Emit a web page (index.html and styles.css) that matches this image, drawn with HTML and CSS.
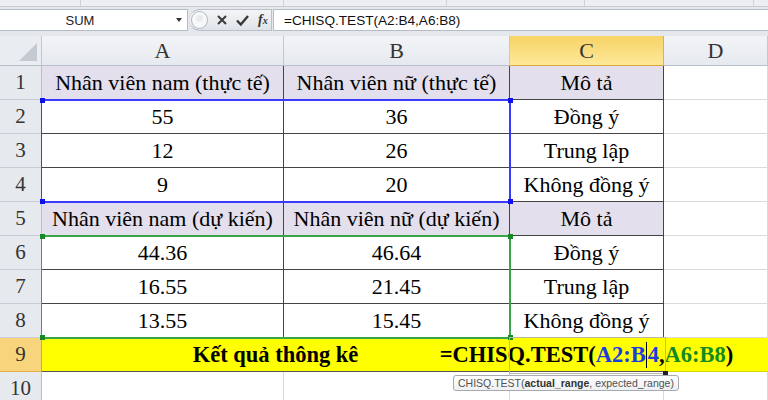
FILE: index.html
```html
<!DOCTYPE html>
<html>
<head>
<meta charset="utf-8">
<link rel="stylesheet" href="styles.css">
</head>
<body>
<div class="app">
  <div class="ribbon">
    <span class="rg w80"></span><span class="rg w203"></span><span class="rg w163"></span><span class="rg w138"></span><span class="rg w169"></span>
  </div>
  <div class="fbar">
    <div class="namebox"><span class="nb-text">SUM</span><span class="nb-arrow"></span></div>
    <div class="btns">
      <span class="grip"></span>
      <svg class="ico" width="10" height="10" viewBox="0 0 10 10"><path d="M1 1 L9 9 M9 1 L1 9" stroke="#3a3a3a" stroke-width="2" fill="none"/></svg>
      <svg class="ico" width="13" height="11" viewBox="0 0 13 11"><path d="M1 5.5 L4.8 9.5 L12 1" stroke="#3a3a3a" stroke-width="2.4" fill="none" stroke-linejoin="miter"/></svg>
      <span class="fx"><i>f</i><i class="fx-x">x</i></span>
    </div>
    <div class="formula">=CHISQ.TEST(A2:B4,A6:B8)</div>
  </div>
  <div class="sheet">
    <div class="corner"><span class="tri"></span></div>
    <div class="ch">A</div><div class="ch">B</div><div class="ch ch-sel">C</div><div class="ch">D</div>

    <div class="rh">1</div>
    <div class="c t hd">Nhân viên nam (thực tế)</div>
    <div class="c t hd">Nhân viên nữ (thực tế)</div>
    <div class="c t hd">Mô tả</div>
    <div class="c"></div>

    <div class="rh">2</div>
    <div class="c t">55</div><div class="c t">36</div><div class="c t">Đồng ý</div><div class="c"></div>

    <div class="rh">3</div>
    <div class="c t">12</div><div class="c t">26</div><div class="c t">Trung lập</div><div class="c"></div>

    <div class="rh">4</div>
    <div class="c t">9</div><div class="c t">20</div><div class="c t">Không đồng ý</div><div class="c"></div>

    <div class="rh">5</div>
    <div class="c t hd">Nhân viên nam (dự kiến)</div>
    <div class="c t hd">Nhân viên nữ (dự kiến)</div>
    <div class="c t hd">Mô tả</div>
    <div class="c"></div>

    <div class="rh">6</div>
    <div class="c t">44.36</div><div class="c t">46.64</div><div class="c t">Đồng ý</div><div class="c"></div>

    <div class="rh">7</div>
    <div class="c t">16.55</div><div class="c t">21.45</div><div class="c t">Trung lập</div><div class="c"></div>

    <div class="rh">8</div>
    <div class="c t">13.55</div><div class="c t">15.45</div><div class="c t">Không đồng ý</div><div class="c"></div>

    <div class="rh rh-sel">9</div>
    <div class="c y y-t span2 bold">Kết quả thông kê</div>
    <div class="c y y-t edit"><span class="ftext">=CHISQ.TEST(<span class="ref-b">A2:B</span><span class="caret"></span><span class="ref-b">4</span>,<span class="ref-g">A6:B8</span>)</span></div>
    <div class="c y"></div>

    <div class="rh">10</div>
    <div class="c"></div><div class="c"></div><div class="c"></div><div class="c"></div>

    <div class="range blue"><i class="h tl"></i><i class="h tr"></i><i class="h bl"></i><i class="h br"></i></div>
    <div class="range green"><i class="h tl"></i><i class="h tr"></i><i class="h bl"></i><i class="h br"></i></div>
    <div class="editframe"><i class="fill"></i></div>
    <div class="tip">CHISQ.TEST(<b>actual_range</b>, expected_range)</div>
  </div>
</div>
</body>
</html>
```

FILE: styles.css
```css
* { box-sizing: border-box; margin: 0; padding: 0; }
html, body { width: 768px; height: 400px; overflow: hidden; background: #fff; }
body { font-family: "Liberation Serif", "Times New Roman", serif; }

.app { display: flex; flex-direction: column; height: 400px; overflow: hidden; background: #e4e8ed; }

.ribbon { flex: none; height: 7px; display: flex; background: #eceef2; border-bottom: 1px solid #c6cbd3; }
.rg { height: 100%; border-right: 1px solid #cfd3d9; }
.w80 { width: 81px; }
.w203 { width: 203px; }
.w163 { width: 163px; }
.w138 { width: 138px; }
.w169 { width: 169px; }

.fbar { flex: none; height: 22px; margin: 2px 0 5px; display: flex; background: #e4e8ed; }
.namebox {
  width: 188px; background: #fff; border: 1px solid #b5bcc6; border-left: none;
  display: flex; align-items: center; position: relative;
  font-family: "Liberation Sans", Arial, sans-serif; font-size: 13px; color: #222;
}
.nb-text { flex: 1; text-align: center; padding-right: 16px; }
.nb-arrow {
  width: 0; height: 0; margin-right: 5px;
  border-left: 3.5px solid transparent; border-right: 3.5px solid transparent; border-top: 4px solid #333;
}
.btns {
  width: 83px; margin-left: 1px; display: flex; align-items: center; gap: 9px;
  background: linear-gradient(#f4f5f7, #dfe3e8); border: 1px solid #b9c0c9; border-left: none;
  border-radius: 11px 0 0 11px; padding-left: 2px;
}
.grip {
  width: 17px; height: 18px; border-radius: 50%; border: 1px solid #b4bac3;
  background: radial-gradient(circle at 50% 40%, #e8eaee 0 3px, #f7f8fa 4px);
}
.ico { display: block; }
.fx { font-family: "Liberation Serif", serif; font-size: 14px; color: #333; font-weight: bold; }
.fx-x { font-size: 10px; }
.formula {
  flex: 1; margin-left: 1px; background: #fff; border: 1px solid #b5bcc6; border-right: none;
  font-family: "Liberation Sans", Arial, sans-serif; font-size: 13.6px; color: #111;
  padding-left: 10px; display: flex; align-items: center;
}

.sheet {
  position: relative; flex: none; background: #fff;
  display: grid;
  grid-template-columns: 42px 242px 226px 154px 104px;
  grid-template-rows: 30px repeat(10, 34px);
}
.corner {
  background: #e9ecf1; border-right: 1px solid #c2c8d0; border-bottom: 1px solid #b8bfc8; position: relative;
}
.tri {
  position: absolute; right: 4px; bottom: 4px; width: 0; height: 0;
  border-left: 18px solid transparent; border-bottom: 18px solid #c5cad2;
}
.ch {
  background: linear-gradient(#f2f4f7, #e6e9ee);
  border-right: 1px solid #c3c8d0; border-bottom: 1px solid #b8bfc8;
  display: flex; align-items: center; justify-content: center;
  font-size: 22px; color: #333;
}
.ch-sel { background: linear-gradient(#f8d366, #fde89a); border-right-color: #e2b04a; border-bottom-color: #d9a53a; }
.rh {
  background: #e6e9ee; border-right: 1px solid #b8bfc8; border-bottom: 1px solid #c9ced6;
  display: flex; align-items: center; justify-content: center;
  font-size: 21px; color: #333;
}
.rh-sel { background: #f8d47c; border-bottom-color: #e0b14b; border-right-color: #d9a53a; }

.c {
  border-right: 1px solid #d9d9d9; border-bottom: 1px solid #dadada;
  display: flex; align-items: center; justify-content: center;
  font-size: 22px; color: #000; white-space: nowrap;
}
.t { border-right-color: #444; border-bottom-color: #444; }
.hd { background: #e4dfec; }
.y { background: #ffff00; border-right-color: #ffff00; border-bottom-color: #d6d600; }
.y-t { border-bottom-color: #555; }
.span2 { grid-column: span 2; }
.bold { font-weight: bold; font-size: 22.5px; }
.edit { position: relative; z-index: 2; overflow: visible; }
.ftext { font-weight: bold; font-size: 22.5px; display: flex; align-items: center; }
.ref-b { color: #1a3ce0; }
.ref-g { color: #138a22; }
.caret { display: inline-block; width: 0; height: 26px; border-left: 1px solid #000; margin: 0 0.5px; }

.range { position: absolute; left: 41px; width: 470px; height: 104px; z-index: 3; }
.blue { top: 63px; border: 2px solid #3a3aff; border-left-width: 1px; }
.green { top: 199px; border: 2px solid #3aa548; border-left-width: 1px; }
.h { position: absolute; width: 5px; height: 5px; }
.blue .h { background: #1010ee; }
.green .h { background: #178a28; }
.tl { left: -2px; top: -3px; }
.tr { right: -4px; top: -3px; }
.bl { left: -2px; bottom: -3px; }
.br { right: -4px; bottom: -3px; }

.editframe {
  position: absolute; left: 509px; top: 301px; width: 157px; height: 37px;
  border: 1px solid #b8b8a0; z-index: 3;
}
.fill { position: absolute; right: -3px; bottom: -3px; width: 5px; height: 5px; background: #222; }

.tip {
  position: absolute; left: 453px; top: 339px; height: 16px; padding: 0 4px; z-index: 4;
  border: 1px solid #a5a9b0; border-radius: 3px;
  background: linear-gradient(#ffffff, #eef0f3);
  font-family: "Liberation Sans", Arial, sans-serif; font-size: 10.5px; line-height: 14px; color: #505050;
  white-space: nowrap;
}
.tip b { color: #333; }
```
